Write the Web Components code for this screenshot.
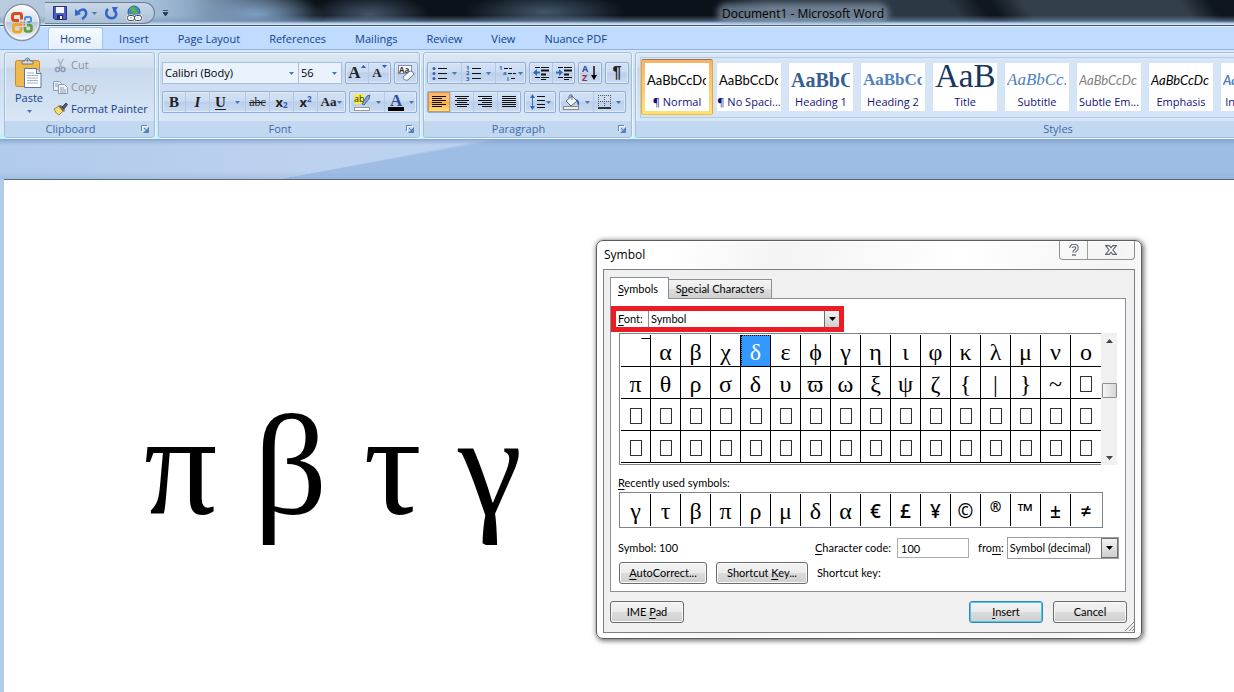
<!DOCTYPE html>
<html lang="en">
<head>
<meta charset="utf-8">
<title>Document1 - Microsoft Word</title>
<style>
html,body{margin:0;height:100%}
body{font:11px/16px "Open Sans","Noto Sans",sans-serif;color:#15428b;overflow:hidden}
</style>
</head>
<body>
<word-window></word-window>
<script>
const define=(name,html,setup)=>{
  const t=document.createElement('template');
  t.innerHTML=`<style>*{box-sizing:border-box}button,select,input{font:inherit;color:inherit;margin:0}a{color:inherit;text-decoration:none}u{text-underline-offset:2px}</style>`+html;
  customElements.define(name,class extends HTMLElement{
    constructor(){super();this.attachShadow({mode:'open'}).append(t.content.cloneNode(true));}
    connectedCallback(){if(setup&&!this.ready){this.ready=true;setup(this,this.shadowRoot);}}
  });
};

/* Small drop-down triangle */
define('drop-caret',`<style>:host{display:inline-flex;flex:none}svg{display:block}</style>
<svg width="5" height="3" viewBox="0 0 5 3"><path d="M0 0h5L2.5 3z" fill="#4a75b5"/></svg>`);

/* One tool button; attributes: width, active, label */
define('tool-button',`<style>
:host{display:flex;border-left:1px solid #b4c9e5}
:host(:first-child){border-left:0}
button{flex:1;border:0;padding:0;background:none;display:flex;align-items:center;justify-content:center;gap:5px;color:#222;white-space:nowrap}
:host([active]) button{background:linear-gradient(#fcb469,#fdc578 45%,#fda83c 50%,#ffe486);box-shadow:inset 0 0 0 1px #c69a5e}
</style><button type="button"><slot></slot></button>`,(h,r)=>{
  h.style.width=h.getAttribute('width')+'px';
  r.querySelector('button').setAttribute('aria-label',h.getAttribute('label'));
});

define('tool-cluster',`<style>
:host{display:flex;height:22px;border:1px solid #8fafd8;border-radius:2px;background:linear-gradient(#d3e2f5,#cbdbf1 45%,#bccfea 50%,#cadbf2);box-shadow:inset 0 0 0 1px #dfeaf7;overflow:hidden}
</style><slot></slot>`);

define('ribbon-group',`<style>
:host{display:flex;flex-direction:column;flex:none;height:86px;border:1px solid #9fbfde;border-radius:3px;background:linear-gradient(#dce7f4,#d3e0f0 17%,#c8d8ec 18%,#d8e6f6 80%);box-shadow:1px 1px 0 #eef5fc,inset 1px 1px 0 #e8f0f9;overflow:hidden}
.body{flex:1;min-height:0;display:flex}
footer{height:16px;display:flex;align-items:center;justify-content:center;background:#c1d8f0;color:#3e6aaa;padding-right:5px}
span{flex:1;text-align:center;padding-right:5px}
button{border:0;padding:0;background:none;display:flex}
:host(:not([launcher])) button{display:none}
</style><div class="body"><slot></slot></div>
<footer><span></span><button type="button" aria-label="More options"><svg width="8" height="8" viewBox="0 0 8 8"><path d="M.5 6V.5H6" fill="none" stroke="#5b80b4"/><path d="M3 3l2 2M7.5 2.5v5h-5M7 4v3H4z" fill="#5b80b4" stroke="#5b80b4"/><path d="M1.500 7V1.500H7" fill="none" stroke="#fff"/></svg></button></footer>`,(h,r)=>{
  r.querySelector('span').textContent=h.getAttribute('name');
  h.style.width=h.getAttribute('width')+'px';
});

define('group-clipboard',`<style>
:host{display:flex;flex:1;padding:1px 0 0 6px;gap:6px;color:#15428b}
button{border:0;background:none;padding:0;display:flex;align-items:center}
.paste{flex-direction:column;width:36px;height:60px;margin-top:3px;line-height:20px}
.paste drop-caret{margin-top:2px}
.list{display:flex;flex-direction:column}
.list button{flex:none;height:22px;gap:3px;white-space:nowrap}
.list svg{width:15px}
.off{color:#8d8f93}
</style>
<button type="button" class="paste"><svg width="28" height="31" viewBox="0 0 28 31"><rect x=".5" y="3.500" width="24" height="26" rx="2" fill="#eeb94f" stroke="#c48a2c"/><path d="M7 7V4h3q0-3 2.500-3T15 4h3v3z" fill="#d9dde5" stroke="#6d7684"/><circle cx="12.500" cy="3.500" r="1" fill="#555"/><path d="M9.500 11.500h12l4.500 5v14H9.500z" fill="#fff" stroke="#5a76a6"/><path d="M21.500 11.500v5H26" fill="#dbe5f4" stroke="#5a76a6"/><path d="M12 16h7M12 18.500h11M12 21h11M12 23.500h11M12 26h11" stroke="#9db0cf"/></svg>Paste<drop-caret></drop-caret></button>
<div class="list">
<button type="button" class="off"><svg height="15" viewBox="0 0 15 15" fill="none" stroke="#8b9cb4" stroke-width="1.600"><path d="M5 1l4 9M10 1L6 10" stroke="#a9b4c4"/><circle cx="4.500" cy="11.500" r="2"/><circle cx="10" cy="11.500" r="2"/></svg>Cut</button>
<button type="button" class="off"><svg height="13" viewBox="0 0 15 13" fill="#eef2f8" stroke="#8d9cb3"><path d="M.5.5h6l2 2v7h-8z"/><path d="M5.500 3.500h6l3 3v6h-9z"/><path d="M2 3h3M2 5h3M7 7h4M7 9h6M7 11h6"/></svg>Copy</button>
<button type="button"><svg height="14" viewBox="0 0 15 14"><path d="M1 7l5-3 4 5-4 4q-3-1-5-6z" fill="#f3dc74" stroke="#a68a3a"/><path d="M5 4l6 6 1-2-4-5z" fill="#7b6a50"/><path d="M9 5l4-4 1.500 1.500L11 7z" fill="#505a80" stroke="#3b4468"/></svg>Format Painter</button>
</div>`);

define('group-font',`<style>
:host{display:flex;flex-direction:column;gap:7px;padding:9px 3px 0}
.row{display:flex;gap:3px}
.combo{display:grid;height:22px;color:#000;margin-right:-4px}
.combo>*{grid-area:1/1}
.combo:nth-of-type(2){margin-right:0}
select{appearance:none;border:1px solid #a8c0e0;background:#eaf3fd;padding:0 2px;border-radius:0;outline:0}
drop-caret{justify-self:end;align-self:center;margin-right:5px;pointer-events:none}
tool-button drop-caret{margin-right:0}
b,i,u,s{font-family:"Liberation Serif",serif;font-size:15px;font-weight:bold;line-height:16px}
u{margin-right:4px}
s{font-size:12px;font-weight:normal}
small{font-size:8px;color:#2f58b0;line-height:8px}
.sub{display:flex;font:bold 13px/14px "Open Sans",sans-serif}
.sub small{align-self:flex-end}.sub.sup small{align-self:flex-start}
.grow{display:flex;align-items:center;font:bold 17px/18px "Liberation Serif",serif}
.grow svg{align-self:flex-start}
.grow.s{font-size:13px}
.case{font-size:13px;margin-right:-4px}
tool-button svg{display:block}
</style>
<div class="row">
<div class="combo" style="width:137px"><select aria-label="Font"><option>Calibri (Body)</option></select><drop-caret></drop-caret></div>
<div class="combo" style="width:44px"><select aria-label="Font size"><option>56</option></select><drop-caret></drop-caret></div>
<tool-cluster><tool-button width="22" label="Grow font"><span class="grow">A<svg width="5" height="4" viewBox="0 0 5 4"><path d="M0 4L2.500 1 5 4z" fill="#2f58b0"/></svg></span></tool-button><tool-button width="22" label="Shrink font"><span class="grow s">A<svg width="5" height="4" viewBox="0 0 5 4"><path d="M0 1L2.500 4 5 1z" fill="#2f58b0"/></svg></span></tool-button></tool-cluster>
<tool-cluster><tool-button width="22" label="Clear formatting"><svg width="17" height="18" viewBox="0 0 17 18"><rect x=".5" y="1.500" width="13" height="8" fill="#fff" stroke="#7f8da6"/><text x="1" y="9" font-family="Open Sans" font-size="8" font-weight="bold" fill="#333">Aa</text><path d="M5 13l7-6q3 0 4 3l-6 6q-4 1-5-3z" fill="#f3f6fb" stroke="#6f7f9c"/></svg></tool-button></tool-cluster>
</div>
<div class="row">
<tool-cluster><tool-button width="22" label="Bold"><b>B</b></tool-button><tool-button width="24" label="Italic"><i>I</i></tool-button><tool-button width="36" label="Underline"><u>U</u><drop-caret></drop-caret></tool-button><tool-button width="24" label="Strikethrough"><s>abc</s></tool-button><tool-button width="24" label="Subscript"><span class="sub">x<small>2</small></span></tool-button><tool-button width="24" label="Superscript"><span class="sub sup">x<small>2</small></span></tool-button><tool-button width="28" label="Change case"><b class="case">Aa</b><drop-caret></drop-caret></tool-button></tool-cluster>
<tool-cluster><tool-button width="34" label="Highlight"><svg width="17" height="18" viewBox="0 0 17 18"><rect y="1" width="10" height="10" fill="#f6ee4c"/><text x="0" y="9" font-family="Open Sans" font-size="9" fill="#222">ab</text><path d="M8 11l5-8 3-1-1 4-5 6z" fill="#8ba6cf" stroke="#4e6796"/><rect x=".5" y="14.500" width="15" height="3" fill="#fff" stroke="#999"/></svg><drop-caret></drop-caret></tool-button><tool-button width="32" label="Font color"><svg width="16" height="18" viewBox="0 0 16 18"><text x="2" y="13" font-family="Liberation Serif" font-size="17" font-weight="bold" fill="#2c4d94">A</text><rect y="14" width="16" height="4"/></svg><drop-caret></drop-caret></tool-button></tool-cluster>
</div>`);

const lines=(a)=>`<svg width="15" height="12" viewBox="0 0 15 12" stroke="#111">${a.map(([x,w],i)=>`<path d="M${x} ${i*2+.5}h${w}"/>`).join('')}</svg>`;
define('group-paragraph',`<style>
:host{display:flex;flex-direction:column;gap:7px;padding:9px 3px 0}
.row{display:flex;gap:3px}svg{display:block}
text{font-family:"Open Sans";font-weight:bold}
b{font:bold 16px/16px "Liberation Sans",sans-serif}
.tight{margin-left:-4px}
</style>
<div class="row">
<tool-cluster><tool-button width="33" label="Bullets"><svg width="15" height="15" viewBox="0 0 15 15" stroke="#111"><path d="M6 2.500h9M6 7.500h9M6 12.500h9"/><g fill="#3c5fae" stroke="none"><circle cx="2" cy="2.500" r="1.500"/><circle cx="2" cy="7.500" r="1.500"/><circle cx="2" cy="12.500" r="1.500"/></g></svg><drop-caret></drop-caret></tool-button><tool-button width="34" label="Numbering"><svg width="15" height="16" viewBox="0 0 15 16"><path d="M6 3.500h9M6 8.500h9M6 13.500h9" stroke="#111"/><g fill="#2f58b0" font-size="6"><text x="0" y="5">1</text><text x="0" y="10">2</text><text x="0" y="15.500">3</text></g></svg><drop-caret></drop-caret></tool-button><tool-button width="30" label="Multilevel list"><svg width="18" height="16" viewBox="0 0 18 16"><path d="M5 3.500h8M9 8.500h8M12 13.500h5" stroke="#111" stroke-dasharray="4 1"/><g fill="#2f58b0" font-size="6"><text x="0" y="5">1</text><text x="4" y="10">a</text><text x="8" y="15.500">i</text></g></svg><drop-caret class="tight"></drop-caret></tool-button></tool-cluster>
<tool-cluster><tool-button width="22" label="Decrease indent"><svg width="16" height="13" viewBox="0 0 16 13"><path d="M2 .5h5M8 .5h8M2 10.500h5M8 10.500h8M8 12.500h5" stroke="#111"/><path d="M8 3.500h8M8 7.500h5" stroke="#111" stroke-width="2"/><path d="M0 5.500L4 2v2.500h3v2H4V9z" fill="#2f6bc0"/></svg></tool-button><tool-button width="22" label="Increase indent"><svg width="16" height="13" viewBox="0 0 16 13"><path d="M2 .5h5M8 .5h8M2 10.500h5M8 10.500h8M8 12.500h5" stroke="#111"/><path d="M8 3.500h8M8 7.500h5" stroke="#111" stroke-width="2"/><path d="M7 5.500L3 2v2.500H0v2h3V9z" fill="#2f6bc0"/></svg></tool-button></tool-cluster>
<tool-cluster><tool-button width="22" label="Sort"><svg width="16" height="18" viewBox="0 0 16 18"><text x="0" y="8" font-size="9" fill="#2c4d94">A</text><text x="0" y="17" font-size="9" fill="#a02c3c">Z</text><path d="M12 2v12" stroke="#111" stroke-width="1.500"/><path d="M9 11h6l-3 5z"/></svg></tool-button></tool-cluster>
<tool-cluster><tool-button width="22" label="Show marks"><b>¶</b></tool-button></tool-cluster>
</div>
<div class="row">
<tool-cluster><tool-button active width="22" label="Align left">${lines([[0,14],[0,10],[0,14],[0,10],[0,14],[0,10]])}</tool-button><tool-button width="23" label="Center">${lines([[0,14],[2,10],[0,14],[2,10],[0,14],[2,10]])}</tool-button><tool-button width="24" label="Align right">${lines([[0,14],[4,10],[0,14],[4,10],[0,14],[4,10]])}</tool-button><tool-button width="23" label="Justify">${lines([[0,14],[0,14],[0,14],[0,14],[0,14],[0,14]])}</tool-button></tool-cluster>
<tool-cluster><tool-button width="30" label="Line spacing"><svg width="15" height="16" viewBox="0 0 15 16"><path d="M7 2.500h8M7 6.500h8M7 10.500h8M7 13.500h8" stroke="#111"/><path d="M2.500 3v10" stroke="#2f6bc0"/><path d="M0 4L2.500 0 5 4zM0 12l2.500 4L5 12z" fill="#2f6bc0"/></svg><drop-caret class="tight"></drop-caret></tool-button></tool-cluster>
<tool-cluster><tool-button width="33" label="Shading"><svg width="17" height="16" viewBox="0 0 17 16"><path d="M3 7l6-5 5 5-6 5z" fill="#f4f7fc" stroke="#56678a"/><path d="M6 4q0-4 3-3v5" fill="none" stroke="#56678a"/><path d="M13 5q4 1 3 7-2-1-2-5z" fill="#2f58b0"/><rect x=".5" y="12.500" width="15" height="3" fill="#eee" stroke="#888"/></svg><drop-caret></drop-caret></tool-button><tool-button width="32" label="Borders"><svg width="13" height="14" viewBox="0 0 13 14"><path d="M.5 0v12M6.500 0v12M12.500 0v12M0 .5h13M0 6.500h13" stroke="#555" stroke-dasharray="1 1"/><path d="M0 13h13" stroke="#000" stroke-width="1.500"/></svg><drop-caret></drop-caret></tool-button></tool-cluster>
</div>`);

define('style-card',`<style>
:host{flex:none;width:72px;height:56px;display:flex;padding:3px;border:1px solid transparent;border-radius:2px;color:#12127c}
:host([active]){border-color:#9b7650 #e6a63a #f1c13a;background:linear-gradient(#f7b366,#fbc36f 30%,#ffe070)}
button{flex:1;min-width:0;border:0;background:#fff;padding:0;display:flex;flex-direction:column;overflow:hidden;text-align:center;white-space:nowrap}
.sample{width:59px;height:30px;margin-left:2px;overflow:hidden;text-align:left;color:#000;font:13px/34px Lato,"Open Sans",sans-serif}
.name{width:64px;line-height:18px}
:host([kind=h1]) .sample{font:bold 20px/34px "Liberation Serif",serif;color:#365f91}
:host([kind=h2]) .sample{font:bold 17px/34px "Liberation Serif",serif;color:#4f81bd}
:host([kind=title]) .sample{font:33px/26px "Liberation Serif",serif;color:#17365d}
:host([kind=sub]) .sample{font:italic 17px/34px "Liberation Serif",serif;color:#4f81bd}
:host([kind=se]) .sample{font-style:italic;color:#808080}
:host([kind=em]) .sample{font-style:italic}
:host([kind=ie]) .sample{font-style:italic;font-weight:bold;color:#4f81bd}
</style><button type="button"><span class="sample"></span><span class="name"><slot></slot></span></button>`,(h,r)=>{
  r.querySelector('.sample').textContent=h.getAttribute('sample')||'AaBbCcDc';
});

define('group-styles',`<style>
:host{display:flex;flex:1;padding:4px 0 3px 4px;min-width:0}
div{display:flex;flex:1;min-width:0;border:1px solid #b3cce9;background:#d5e5f7;padding-top:1px;height:61px}
</style><div>
<style-card active>¶ Normal</style-card><style-card>¶ No Spaci...</style-card><style-card kind="h1">Heading 1</style-card><style-card kind="h2" sample="AaBbCc">Heading 2</style-card><style-card kind="title" sample="AaB">Title</style-card><style-card kind="sub" sample="AaBbCc.">Subtitle</style-card><style-card kind="se">Subtle Em...</style-card><style-card kind="em">Emphasis</style-card><style-card kind="ie">Intense E...</style-card></div>`);

define('ribbon-bar',`<style>
:host{display:flex;gap:3px;height:91px;padding:2px 0 0 4px;overflow:hidden;border-top:1px solid #8db2e3;border-bottom:1px solid #86a9cf;background:linear-gradient(#dde8f5,#d5e2f1 20%,#ccdcef 22%,#dbeaf9 92%,#b9f2fa 97%,#c8f6fb)}
</style>
<ribbon-group name="Clipboard" width="151" launcher><group-clipboard></group-clipboard></ribbon-group>
<ribbon-group name="Font" width="262" launcher><group-font></group-font></ribbon-group>
<ribbon-group name="Paragraph" width="209" launcher><group-paragraph></group-paragraph></ribbon-group>
<ribbon-group name="Styles" width="856"><group-styles></group-styles></ribbon-group>`);

define('ribbon-tabs',`<style>
:host{display:flex;height:23px;background:#bfdbff;border-top:1px solid #e4f0ff;padding-left:48px}
nav{display:flex;gap:3px}
a{padding:0 12px;line-height:22px;white-space:nowrap;border:1px solid transparent;border-bottom:0;height:23px}
a[aria-current]{padding:0 11px;background:linear-gradient(#f6faff,#e4eefa);border-color:#9ac9e6;border-radius:3px 3px 0 0;box-shadow:inset 1px 0 #fff}
</style><nav aria-label="Ribbon"><a href="#" aria-current="page">Home</a><a href="#">Insert</a><a href="#">Page Layout</a><a href="#">References</a><a href="#">Mailings</a><a href="#">Review</a><a href="#">View</a><a href="#">Nuance PDF</a></nav>`);

define('title-bar',`<style>
:host{display:flex;height:26px;border-bottom:1px solid #3e5468;background:
linear-gradient(transparent 62%,rgba(120,150,185,.55) 84%,#a9c3de 92%,#e2eefb),
radial-gradient(ellipse 70px 20px at 255px 14px,rgba(130,165,205,.9),transparent),
radial-gradient(ellipse 60px 20px at 370px 14px,rgba(120,150,185,.5),transparent),
radial-gradient(ellipse 80px 20px at 545px 12px,rgba(100,130,160,.6),transparent),
linear-gradient(90deg,#b9cbdd 0,#a7c0da 150px,#8ea9c6 190px,rgba(60,78,98,0) 315px),
linear-gradient(55deg,#0c1219 0 610px,#2c3843 640px 790px,#10171e 815px 825px,#323e49 850px 980px,#0e151c 1005px)}
.qat{display:flex;align-items:center;gap:8px;width:110px;height:22px;margin:2px 0 0 45px;padding:0 8px;border:1px solid #6e8193;border-left:0;border-radius:0 11px 11px 0;background:linear-gradient(#c9d8e8,#a9c0d8)}
button{border:0;background:none;padding:0;display:flex;align-items:center;gap:4px}
.more{margin-left:7px;width:8px}
h1{margin:0 0 0 202px;flex:1;text-align:center;font:12px/27px "Open Sans",sans-serif;color:#000}
h1 span{display:inline-block;line-height:11px;border-radius:8px;background:rgba(150,172,195,.6);box-shadow:0 0 6px 5px rgba(150,172,195,.6)}
</style>
<div class="qat">
<button type="button" aria-label="Save"><svg width="14" height="14" viewBox="0 0 14 14"><path d="M.5.5h13v13H2l-1.500-1.500z" fill="#4a5fc4" stroke="#2c2f85"/><rect x="3" y="1" width="8" height="6" fill="#f4f6fc"/><path d="M4 9h6v5H4z" fill="#24286e"/><path d="M7 10h2v3H7z" fill="#fff"/></svg></button>
<button type="button" aria-label="Undo"><svg width="13" height="13" viewBox="0 0 13 13"><path d="M3 5q6-5 8 0 1 4-4 7" fill="none" stroke="#3564c8" stroke-width="2.500"/><path d="M0 2v7l6-2z" fill="#3564c8"/></svg><drop-caret></drop-caret></button>
<button type="button" aria-label="Redo"><svg width="13" height="13" viewBox="0 0 13 13"><path d="M3 2q-3 3-1 7 4 4 8 1 3-4-1-7" fill="none" stroke="#3564c8" stroke-width="2.500"/><path d="M7 0h6L9 6z" fill="#3564c8"/></svg></button>
<button type="button" aria-label="Link"><svg width="17" height="17" viewBox="0 0 17 17"><circle cx="8" cy="7" r="6" fill="#3d8ac8" stroke="#27648f"/><path d="M4 3q4-3 5 0t3 4q-3 4-6 0T4 3z" fill="#5db04a"/><g fill="none" stroke="#fff" stroke-width="3"><rect x="2" y="11" width="6" height="4" rx="2"/><rect x="9" y="11" width="6" height="4" rx="2"/></g><g fill="none" stroke="#444"><rect x="1.500" y="10.500" width="7" height="5" rx="2"/><rect x="8.500" y="10.500" width="7" height="5" rx="2"/></g></svg></button>
</div>
<button type="button" class="more" aria-label="Customize"><svg width="7" height="6" viewBox="0 0 7 6"><path d="M1 .5h5M1 2.500h5L3.500 6z" stroke="#243a5a" fill="#243a5a" stroke-width=".8"/></svg></button>
<h1><span>Document1 - Microsoft Word</span></h1>`);

define('office-button',`<style>:host{display:block}button{display:block;border:0;padding:0;background:none}</style>
<button type="button" aria-label="Office menu"><svg width="40" height="40" viewBox="0 0 40 40"><defs><linearGradient id="g" x1="0" y1="0" x2="0" y2="1"><stop offset="0" stop-color="#fdfeff"/><stop offset=".48" stop-color="#d6dfea"/><stop offset=".5" stop-color="#b8c6d8"/><stop offset="1" stop-color="#f5faff"/></linearGradient></defs>
<circle cx="20" cy="20.500" r="18" fill="url(#g)" stroke="#8594a6" stroke-width="1.500"/><circle cx="20" cy="20" r="16.500" fill="none" stroke="#fff" stroke-opacity=".7"/>
<g fill="none" stroke-width="3"><path d="M17 18.500h-4q-2.500 0-2.500-2v-3q0-2 2.500-2h4.500q2 0 2 2v4" stroke="#dd4a1b"/><path d="M23 18.500v-2q0-1.500 1.500-1.500H27q2 0 2 1.500v2q0 1.500-2 1.500h-1.500" stroke="#4a8fd6" stroke-width="2"/><path d="M18.500 22.500H14q-2.500 0-2.500 2v3.500q0 2 2.500 2h3q2 0 2-2v-3" stroke="#f3a51e" stroke-width="2.800"/><path d="M25 23h2q2.500 0 2.500 2v2.500q0 2-2.500 2h-2q-2 0-2-2V25" stroke="#5f9e35" stroke-width="2.600"/></g><path d="M18.500 19.500h1.500v1.500h-1.500zM21.500 19.500H23v1.500h-1.500zM18.500 22H20v1.500h-1.500zM21.500 22H23v1.500h-1.500z" fill="#e8702a"/></svg></button>`);

/* Symbol grid: a sheet of glyph buttons, sixteen per row */
define('symbol-grid',`<style>
:host{display:grid;grid-template-columns:repeat(16,30px);border:1px solid #7f838c;border-right:0;height:132px;grid-auto-rows:32px;background:#fff;padding:1px 0 0 1px}
button{border:solid #000;border-width:0 1px 1px 0;background:#fff;padding:2px 0 0;color:#000;font:24px/28px "Liberation Serif",serif;display:flex;align-items:center;justify-content:center}
button:nth-of-type(16n){border-right-width:0}
button[aria-pressed]{background:#3399ff;color:#fff;outline:1px dotted #000;outline-offset:-1px}
:host([recent]){height:36px;border-right:1px solid #7f838c;width:484px}
:host([recent]) button{border-bottom:0}
button.sans{font:600 19px/28px "Open Sans",sans-serif}
button.reg{font:bold 14px/28px "Open Sans",sans-serif;padding:0 0 6px}
button.tm{font:600 20px/28px "Open Sans",sans-serif}
i{width:12px;height:16px;border:1px solid #333}
button.bar{align-items:flex-start;justify-content:flex-end;padding:0}
</style>`,(h,r)=>{
  const sel=+h.getAttribute('selected')||-1;
  h.getAttribute('glyphs').split(' ').forEach((g,n)=>{
    const b=document.createElement('button');b.type='button';
    if(g==='_')b.append(document.createElement('i'));else b.textContent=g;
    if(g==='‾')b.className='bar';
    if('€£¥©±≠'.includes(g))b.className='sans';
    if(g==='®')b.className='reg';
    if(g==='™')b.className='tm';
    if(n===sel)b.setAttribute('aria-pressed','true');
    r.append(b);
  });
});

define('dialog-button',`<style>
:host{display:flex;height:22px}
button{flex:1;border:1px solid #6b6b6b;border-radius:3px;padding:0;background:linear-gradient(#f3f3f3,#ebebeb 48%,#dbdbdb 52%,#cfcfcf);box-shadow:inset 0 0 0 1px #fafafa;color:#000}
:host([primary]) button{border-color:#3c7fb1;box-shadow:inset 0 0 0 1px #48cbf2}
</style><button type="button"><slot></slot></button>`,h=>{h.style.width=h.getAttribute('width')+'px';});

define('symbol-dialog',`<style>
:host{display:flex;flex-direction:column;width:546px;height:399px;border:1px solid #5c5c5c;border-radius:7px;background:linear-gradient(100deg,#fff 12%,#f4f4f4 30%,#fff 60%,#f4f4f4 85%,#fff);box-shadow:inset 0 0 0 1px #fff,1px 1px 5px 1px rgba(0,0,0,.55);padding:0 6px 5px;color:#000;font:11px/16px Lato,"Open Sans",sans-serif}
header{display:flex;justify-content:space-between;height:28px}
h2{margin:0;padding-left:1px;font:12px/28px "Open Sans",sans-serif}
.ctl{display:flex;width:76px;height:19px;border:1px solid #8e9399;border-top:0;border-radius:0 0 4px 4px}
.ctl button{border:0;background:none;padding:0;display:grid;place-items:center;flex:1}
.ctl button:first-child{flex:0 0 28px;border-right:1px solid #9a9ea4}
.client{flex:1;display:flex;flex-direction:column;border:1px solid #7b7f84;background:#f0f0f0;padding:7px 7px 8px 6px}
.tabs{display:flex;align-items:flex-end;height:22px;position:relative;margin-bottom:-1px}
.tabs button{height:19px;border:1px solid #8b8f96;background:linear-gradient(#f3f3f3,#ebebeb 48%,#dcdcdc 52%,#cfcfcf);padding:0;width:104px;margin-bottom:1px;border-bottom:0;white-space:nowrap}
.tabs button:first-child{height:22px;width:59px;background:#fff;margin:0 -1px 0 0;padding-right:3px}
.pane{flex:0 0 294px;border:1px solid #8b8f96;background:#fff;padding-top:7px;margin-right:1px;display:flex;flex-direction:column}
.font{display:flex;width:233px;height:26px;border:5px solid #ed1c24;background:#fff}
.font label{width:33px;padding-left:2px;border-right:1px solid #8b8f96}
.font label,.font select{line-height:16px}
.combo{display:grid;flex:1}
.combo>*{grid-area:1/1;min-width:0}
select{appearance:none;border:0;background:#fff;padding:0 2px;border-radius:0}
.arrow{justify-self:end;width:15px;border-left:1px solid #6e6e6e;background:linear-gradient(#f2f2f2,#cfcfcf);display:grid;place-items:center;pointer-events:none}
.sheet{display:flex;margin:1px 0 0 8px}
.scroll{width:16px;height:132px;display:flex;flex-direction:column;align-items:center;justify-content:space-between;background:#f0f0f0;padding:6px 0 5px}
.thumb{width:15px;height:15px;border:1px solid #8e8e8e;border-radius:1px;background:linear-gradient(90deg,#f5f5f5,#d6d6d6);margin-bottom:18px}
.cap{margin:10px 0 1px 7px}
.recent{margin-left:8px}
.line{display:flex;align-items:center;height:22px;margin:9px 0 0 7px}
.line .lead{width:197px}
input{height:20px;width:72px;border:1px solid #abadb3;padding:0 3px;margin:0 9px 0 6px}
.from{flex:none;width:112px;height:22px;border:1px solid #9a9da3;margin-left:3px}
.from .arrow{width:17px;border:1px solid #6e6e6e}
.keys{display:flex;align-items:center;gap:9px;margin:3px 0 0 8px}
.foot{display:flex;justify-content:flex-end;gap:10px;margin-top:9px}
.foot dialog-button:first-child{margin-right:auto}
.grip{position:absolute;right:7px;bottom:7px}
</style>
<header><h2>Symbol</h2><div class="ctl"><button type="button" aria-label="Help"><svg width="10" height="13" viewBox="0 0 10 13" fill="none"><path d="M2 4q0-2.500 3-2.500T8 4q0 1.500-1.500 2.500T5 8.500M5 10v2" stroke="#5f6672" stroke-width="3.400"/><path d="M2 4q0-2.500 3-2.500T8 4q0 1.500-1.500 2.500T5 8.500M5 10.500v1" stroke="#fff" stroke-width="1.300"/></svg></button><button type="button" aria-label="Close"><svg width="12" height="10" viewBox="0 0 12 10"><path d="M.7.700h3.600L6 2.800 7.700.700h3.600L7.900 5l3.400 4.300H7.700L6 7.200 4.300 9.300H.7L4.100 5z" fill="#fff" stroke="#5f6672" stroke-width="1.200"/></svg></button></div></header>
<div class="client">
<div class="tabs" role="tablist"><button type="button" role="tab" aria-selected="true"><u>S</u>ymbols</button><button type="button" role="tab">S<u>p</u>ecial Characters</button></div>
<section class="pane">
<div class="font"><label for="font"><u>F</u>ont:</label><div class="combo"><select id="font"><option>Symbol</option></select><span class="arrow"><svg width="7" height="4" viewBox="0 0 7 4"><path d="M0 0h7L3.500 4z"/></svg></span></div></div>
<div class="sheet"><symbol-grid selected="4" glyphs="‾ α β χ δ ε ϕ γ η ι φ κ λ μ ν ο π θ ρ σ δ υ ϖ ω ξ ψ ζ { | } ~ _ _ _ _ _ _ _ _ _ _ _ _ _ _ _ _ _ _ _ _ _ _ _ _ _ _ _ _ _ _ _ _ _"></symbol-grid><div class="scroll"><svg width="7" height="4" viewBox="0 0 7 4"><path d="M0 4h7L3.500 0z" fill="#444"/></svg><span class="thumb"></span><svg width="7" height="4" viewBox="0 0 7 4"><path d="M0 0h7L3.500 4z" fill="#444"/></svg></div></div>
<div class="cap"><u>R</u>ecently used symbols:</div>
<symbol-grid class="recent" recent glyphs="γ τ β π ρ μ δ α € £ ¥ © ® ™ ± ≠"></symbol-grid>
<div class="line"><span class="lead">Symbol: 100</span><label for="code"><u>C</u>haracter code:</label><input id="code" value="100"><label for="from">fro<u>m</u>:</label><div class="combo from"><select id="from"><option>Symbol (decimal)</option></select><span class="arrow"><svg width="7" height="4" viewBox="0 0 7 4"><path d="M0 0h7L3.500 4z"/></svg></span></div></div>
<div class="keys"><dialog-button width="88"><u>A</u>utoCorrect...</dialog-button><dialog-button width="92"><span>Shortcut <u>K</u>ey...</span></dialog-button><span>Shortcut key:</span></div>
</section>
<div class="foot"><dialog-button width="74">IME <u>P</u>ad</dialog-button><dialog-button width="74" primary><u>I</u>nsert</dialog-button><dialog-button width="74">Cancel</dialog-button></div>
</div>
<svg class="grip" width="9" height="9" viewBox="0 0 9 9" stroke="#888"><path d="M0 9l9-9M4 9l5-5M7 9l2-2"/></svg>`);

define('doc-page',`<style>
:host{display:block;background:#fff;border-top:1px solid #58697e}
p{margin:0;padding:202px 0 0 140px;font:145px/166px "Liberation Serif",serif;color:#000;white-space:nowrap}
</style><p><slot></slot></p>`);

define('word-window',`<style>
:host{display:flex;flex-direction:column;height:100vh;position:relative;background:linear-gradient(90deg,#b3ccea,#9dbde6)}
.desk{height:39px;flex:none;background:linear-gradient(rgba(110,145,190,.5),transparent 5px,transparent 80%,rgba(130,160,200,.3)),conic-gradient(at 281px 100%,transparent 79deg,#9ebde5 80deg 180deg,transparent 180deg),linear-gradient(90deg,#b1cbea,#bdd2ef 320px)}
doc-page{flex:1;margin-left:4px}
office-button{position:absolute;left:2px;top:2px}
symbol-dialog{position:absolute;left:596px;top:240px}
</style>
<title-bar></title-bar><ribbon-tabs></ribbon-tabs><ribbon-bar></ribbon-bar><div class="desk"></div>
<doc-page>π β τ γ</doc-page>
<office-button></office-button><symbol-dialog role="dialog" aria-label="Symbol"></symbol-dialog>`);
</script>
</body>
</html>
